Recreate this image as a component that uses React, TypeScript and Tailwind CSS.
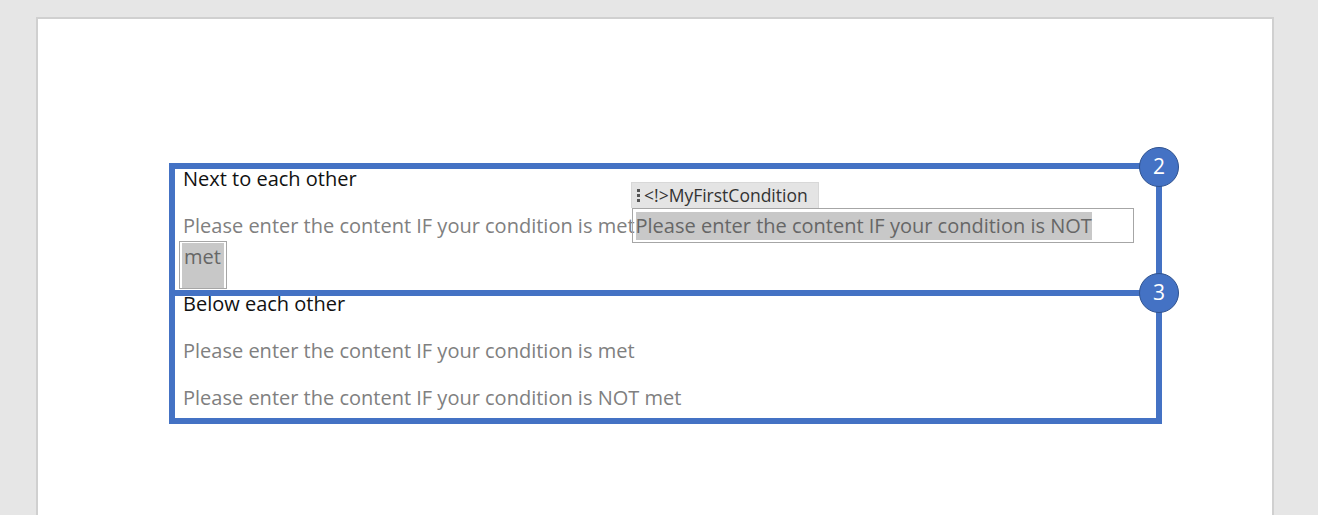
export default function App() {
  return (
    <div className="h-[515px] w-[1318px] overflow-hidden bg-[#e6e6e6] pt-[17px] pl-[36px] font-['Open_Sans',sans-serif]">
      <div className="min-h-[600px] w-[1238px] border-2 border-[#d0d0d0] bg-white pt-[144px] pl-[131px]">
        {/* annotation frame */}
        <div className="relative w-[993px] border-[6px] border-[#4472c4]">
          {/* Next to each other */}
          <div className="h-[127px] border-b-[6px] border-[#4472c4] pl-[8px]">
            <div className="text-[20px] leading-[20px] text-[#111]">Next to each other</div>
            <div className="mt-[21px] flex h-[31px] items-center text-[20px] text-[#808080]">
              <span>Please enter the content IF your condition is met</span>
              <span className="relative -ml-[3px] flex h-[35px] w-[502px] items-center border-[1.5px] border-[#a6a6a6] pl-[3px]">
                <span className="absolute -top-[27px] -left-[1.5px] flex h-[26px] items-center gap-[4px] border border-b-0 border-[#d8d8d8] bg-[#e4e4e4] pr-[10px] pl-[5px] text-[17.5px] text-[#333]">
                  <span className="flex flex-col gap-[2px]">
                    <span className="h-[3px] w-[3px] bg-[#555]" />
                    <span className="h-[3px] w-[3px] bg-[#555]" />
                    <span className="h-[3px] w-[3px] bg-[#555]" />
                  </span>
                  &lt;!&gt;MyFirstCondition
                </span>
                <span className="bg-[#c8c8c8] leading-[28px] text-[#666]">Please enter the content IF your condition is NOT</span>
              </span>
            </div>
            <div className="-ml-[4px] flex h-[48px] w-[48px] border-[1.5px] border-[#a6a6a6] px-[2px] pt-[1px]">
              <span className="flex-1 bg-[#c8c8c8] pl-[2px] text-[20px] leading-[28px] text-[#666]">met</span>
            </div>
          </div>
          {/* Below each other */}
          <div className="h-[122px] pl-[8px]">
            <div className="text-[20px] leading-[16px] text-[#111]">Below each other</div>
            <div className="mt-[23px] text-[20px] leading-[31px] text-[#808080]">Please enter the content IF your condition is met</div>
            <div className="mt-[16px] text-[20px] leading-[31px] text-[#808080]">Please enter the content IF your condition is NOT met</div>
          </div>

          <div className="absolute -top-[22px] left-[964px] flex h-[40px] w-[40px] items-center justify-center rounded-full border-[1.5px] border-[#2f528f] bg-[#4472c4] text-[21px] text-white">
            2
          </div>
          <div className="absolute top-[104px] left-[964px] flex h-[40px] w-[40px] items-center justify-center rounded-full border-[1.5px] border-[#2f528f] bg-[#4472c4] text-[21px] text-white">
            3
          </div>
        </div>
      </div>
    </div>
  );
}
